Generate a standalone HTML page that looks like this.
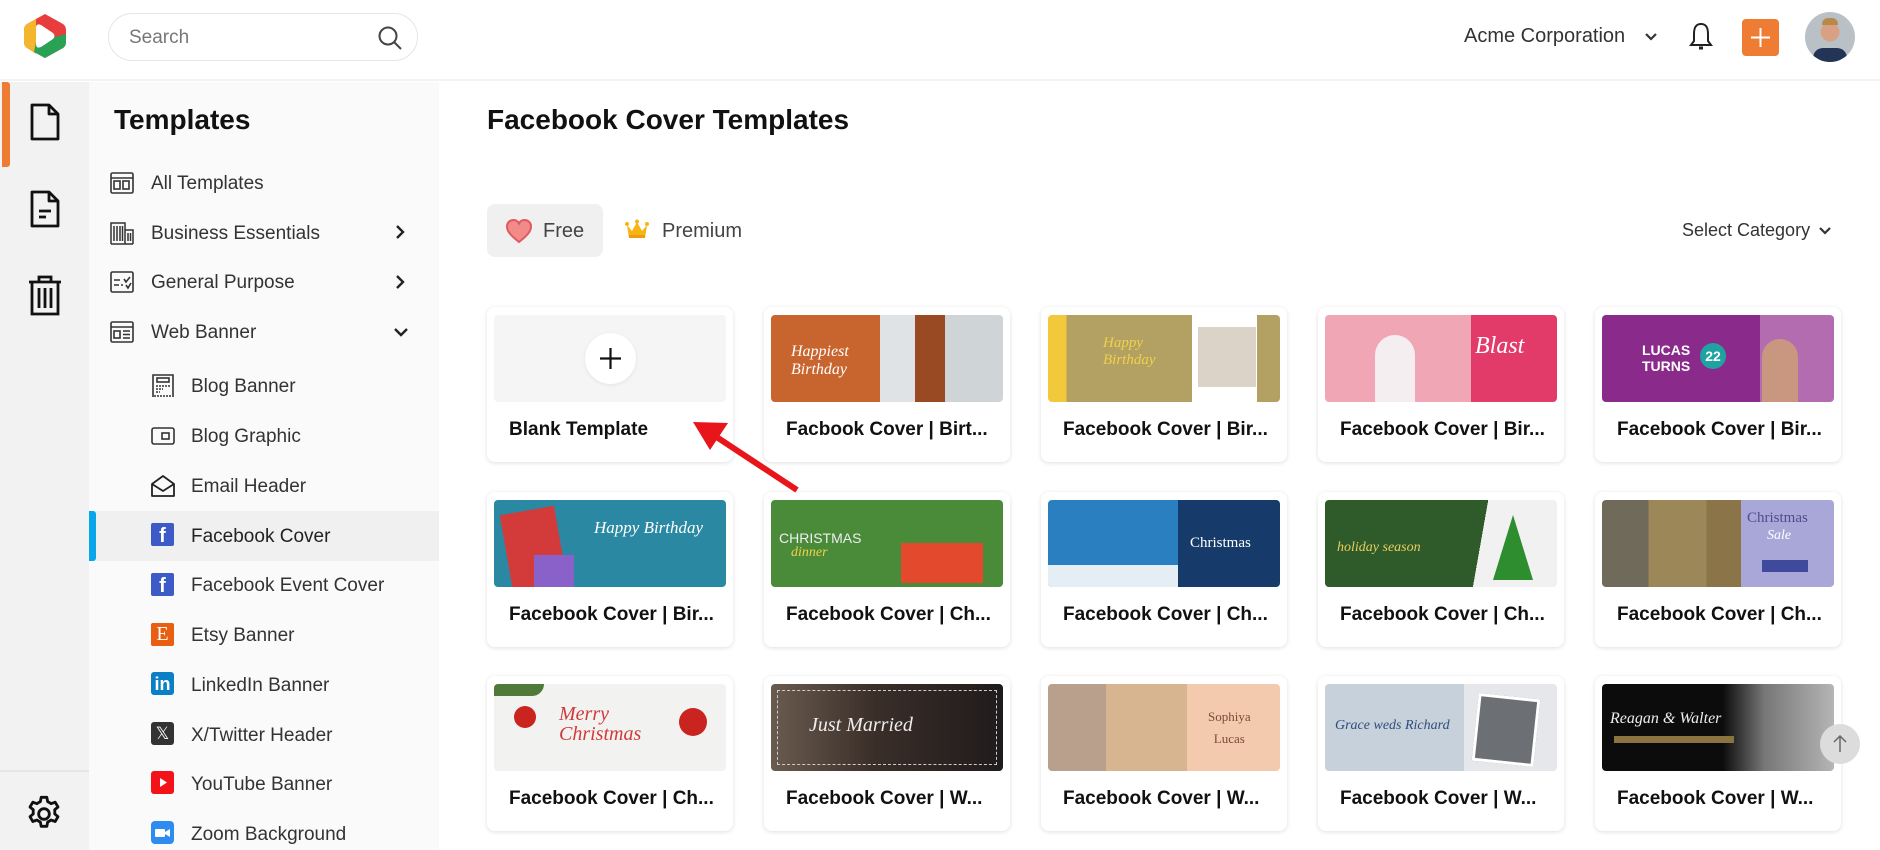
<!DOCTYPE html>
<html><head><meta charset="utf-8"><style>
*{box-sizing:border-box;margin:0;padding:0}
body{width:1880px;height:850px;overflow:hidden;background:#fff;font-family:"Liberation Sans",sans-serif;color:#333;position:relative}
.abs{position:absolute}
.hdr{left:0;top:0;width:1880px;height:81px;border-bottom:2px solid #f3f3f3;background:#fff}
.search{left:108px;top:13px;width:310px;height:48px;border:1px solid #e6e6e6;border-radius:24px}
.search span{position:absolute;left:20px;top:13px;font-size:19px;color:#777}
.rail{left:0;top:82px;width:89px;height:768px;background:#f2f2f2}
.side{left:89px;top:82px;width:350px;height:768px;background:#fafafa}
.mi{position:absolute;font-size:19px;color:#333;line-height:24px}
.ic{position:absolute;width:24px;height:24px}
.card{position:absolute;width:246px;height:155px;background:#fff;border-radius:8px;box-shadow:0 1px 5px rgba(0,0,0,.13)}
.card .im{position:absolute;left:7px;top:8px;width:232px;height:87px;border-radius:4px;overflow:hidden}
.card .t{position:absolute;left:22px;top:112px;font-size:19px;font-weight:bold;color:#111;white-space:nowrap}
.im i{position:absolute;font-style:italic;font-family:"Liberation Serif",serif}
</style></head><body>
<div class="abs hdr"></div>
<svg class="abs" style="left:22px;top:12px" width="46" height="48" viewBox="0 0 46 48">
<path d="M23 2 L41 12 Q44 14 44 18 L44 30 Q44 34 41 36 L23 46 Q23 46 23 46 L5 36 Q2 34 2 30 L2 18 Q2 14 5 12 Z" fill="#e93c3c"/>
<path d="M2 18 Q2 14 5 12 L14 7 L14 42 L5 36 Q2 34 2 30 Z" fill="#f3b62c"/>
<path d="M14 30 L44 22 L44 30 Q44 34 41 36 L23 46 L12 40 Z" fill="#2aa255"/>
<path d="M14 16 Q14 11 19 13 L31 21 Q34 24 31 27 L19 35 Q14 37 14 32 Z" fill="#fff"/>
</svg>
<div class="abs search"><span>Search</span>
<svg class="abs" style="left:268px;top:11px" width="26" height="26" viewBox="0 0 26 26" fill="none" stroke="#444" stroke-width="2"><circle cx="11" cy="11" r="8.5"/><path d="M17.5 17.5 L24 24"/></svg></div>
<div class="abs" style="left:1464px;top:25px;font-size:20px;color:#333">Acme Corporation</div>
<svg class="abs" style="left:1644px;top:32px" width="14" height="10" viewBox="0 0 14 10" fill="none" stroke="#333" stroke-width="2.2"><path d="M2 2 L7 7 L12 2"/></svg>
<svg class="abs" style="left:1689px;top:21px" width="24" height="30" viewBox="0 0 24 30" fill="none" stroke="#222" stroke-width="2"><path d="M12 3 C6 3 5 8 5 13 L5 20 L2 24 L22 24 L19 20 L19 13 C19 8 18 3 12 3 Z"/><path d="M10 27 L14 27" stroke-width="3"/></svg>
<div class="abs" style="left:1742px;top:19px;width:37px;height:37px;background:#ef7c33;border-radius:4px"></div>
<svg class="abs" style="left:1749px;top:26px" width="23" height="23" viewBox="0 0 23 23" stroke="#fff" stroke-width="2"><path d="M11.5 2 V21 M2 11.5 H21"/></svg>
<div class="abs" style="left:1805px;top:12px;width:50px;height:50px;border-radius:50%;background:radial-gradient(circle at 50% 40%,#d9a184 0 9px,#b9c1c6 10px);overflow:hidden"><div style="position:absolute;left:8px;top:36px;width:34px;height:20px;background:#233456;border-radius:10px 10px 0 0"></div><div style="position:absolute;left:17px;top:6px;width:16px;height:7px;background:#b88a4a;border-radius:6px 6px 0 0"></div></div>

<div class="abs rail"></div>
<div class="abs" style="left:2px;top:82px;width:8px;height:85px;background:#ef7c33;border-radius:0 3px 3px 0"></div>
<svg class="abs" style="left:29px;top:102px" width="32" height="40" viewBox="0 0 32 40" fill="none" stroke="#111" stroke-width="2.8" stroke-linejoin="round"><path d="M3 3 H20 L29 12 V37 H3 Z M20 3 V12 H29"/></svg>
<svg class="abs" style="left:29px;top:189px" width="32" height="40" viewBox="0 0 32 40" fill="none" stroke="#111" stroke-width="2.8" stroke-linejoin="round"><path d="M3 3 H20 L29 12 V37 H3 Z M20 3 V12 H29 M10 22 H22 M10 28 H17"/></svg>
<svg class="abs" style="left:27px;top:275px" width="36" height="42" viewBox="0 0 36 42" fill="none" stroke="#111" stroke-width="2.8"><path d="M2 7 H34 M12 7 V2 H24 V7 M5 7 V39 H31 V7 M12 13 V33 M18 13 V33 M24 13 V33"/></svg>
<div class="abs" style="left:0;top:770px;width:89px;height:2px;background:#e6e6e6"></div>
<svg class="abs" style="left:24px;top:794px" width="40" height="40" viewBox="0 0 24 24" fill="none" stroke="#111" stroke-width="1.7" stroke-linejoin="round"><circle cx="12" cy="12" r="3.2"/><path d="M10.3 2 h3.4 l.5 2.6 a7.5 7.5 0 0 1 2 1.2 l2.5-.9 1.7 2.9-2 1.7 a7.5 7.5 0 0 1 0 2.4 l2 1.7-1.7 2.9-2.5-.9 a7.5 7.5 0 0 1-2 1.2 l-.5 2.6 h-3.4 l-.5-2.6 a7.5 7.5 0 0 1-2-1.2 l-2.5.9-1.7-2.9 2-1.7 a7.5 7.5 0 0 1 0-2.4 l-2-1.7 1.7-2.9 2.5.9 a7.5 7.5 0 0 1 2-1.2 Z"/></svg>

<div class="abs side"></div>
<div class="abs" style="left:114px;top:104px;font-size:28px;font-weight:bold;color:#111">Templates</div>
<svg class="ic" style="left:110px;top:171px" viewBox="0 0 24 24" fill="none" stroke="#333" stroke-width="1.6"><rect x="1" y="2" width="22" height="20" rx="1.5"/><path d="M1 7 H23"/><rect x="4" y="10" width="6" height="8"/><rect x="13" y="10" width="6" height="8"/></svg>
<div class="mi" style="left:151px;top:172px">All Templates</div>
<svg class="ic" style="left:110px;top:221px" viewBox="0 0 24 24" fill="none" stroke="#333" stroke-width="1.5"><path d="M1 23 V2 H15 V23 M15 9 H23 V23 M1 23 H23 M4 5 V20 M7 5 V20 M10 5 V20 M12.5 5 V20 M18 12 V20 M20.5 12 V20"/></svg>
<div class="mi" style="left:151px;top:222px">Business Essentials</div>
<svg class="ic" style="left:110px;top:270px" viewBox="0 0 24 24" fill="none" stroke="#333" stroke-width="1.6"><rect x="1" y="2" width="22" height="20" rx="1.5"/><path d="M4 10 H10 M4 15 H9 M11 15 H13 M14 9 L16 12 L20 7 M16 15 L18 18 L21 13"/></svg>
<div class="mi" style="left:151px;top:271px">General Purpose</div>
<svg class="ic" style="left:110px;top:320px" viewBox="0 0 24 24" fill="none" stroke="#333" stroke-width="1.6"><rect x="1" y="2" width="22" height="20" rx="1.5"/><path d="M1 7 H23"/><rect x="4" y="11" width="6" height="7"/><path d="M13 11 H20 M13 14.5 H20 M13 18 H20"/></svg>
<div class="mi" style="left:151px;top:321px">Web Banner</div>
<svg class="abs" style="left:395px;top:224px" width="10" height="16" viewBox="0 0 10 16" fill="none" stroke="#222" stroke-width="2.4"><path d="M2 2 L8 8 L2 14"/></svg>
<svg class="abs" style="left:395px;top:274px" width="10" height="16" viewBox="0 0 10 16" fill="none" stroke="#222" stroke-width="2.4"><path d="M2 2 L8 8 L2 14"/></svg>
<svg class="abs" style="left:393px;top:327px" width="16" height="10" viewBox="0 0 16 10" fill="none" stroke="#222" stroke-width="2.4"><path d="M2 2 L8 8 L14 2"/></svg>
<svg class="ic" style="left:151px;top:374px" viewBox="0 0 24 24" fill="none" stroke="#333" stroke-width="1.6"><path d="M2 23 V1 H22 V23"/><rect x="6" y="4" width="12" height="4"/><path d="M5 12 H19 M5 15 H12 M5 18 H9 M3 22 H21" stroke-dasharray="2 1"/></svg>
<div class="mi" style="left:191px;top:375px">Blog Banner</div>
<svg class="ic" style="left:151px;top:424px" viewBox="0 0 24 24" fill="none" stroke="#333" stroke-width="1.6"><rect x="1" y="4" width="22" height="16" rx="2"/><rect x="11" y="9" width="7" height="6"/></svg>
<div class="mi" style="left:191px;top:425px">Blog Graphic</div>
<svg class="ic" style="left:151px;top:474px" viewBox="0 0 24 24" fill="none" stroke="#222" stroke-width="1.8" stroke-linejoin="round"><path d="M1 10 L12 2 L23 10 V22 H1 Z M1 10 L12 17 L23 10"/></svg>
<div class="mi" style="left:191px;top:475px">Email Header</div>
<div class="abs" style="left:89px;top:511px;width:350px;height:50px;background:#f0f0f0"></div>
<div class="abs" style="left:89px;top:511px;width:7px;height:50px;background:#0aa6ec;border-radius:0 3px 3px 0"></div>
<div class="abs" style="left:151px;top:523px;width:23px;height:23px;background:#3d5bc6;border-radius:2px;color:#fff;font-weight:bold;font-size:20px;text-align:center;line-height:27px">f</div>
<div class="mi" style="left:191px;top:525px;color:#222">Facebook Cover</div>
<div class="abs" style="left:151px;top:573px;width:23px;height:23px;background:#3d5bc6;border-radius:2px;color:#fff;font-weight:bold;font-size:20px;text-align:center;line-height:27px">f</div>
<div class="mi" style="left:191px;top:574px">Facebook Event Cover</div>
<div class="abs" style="left:151px;top:623px;width:23px;height:23px;background:#e95f12;border-radius:2px;color:#fff;font-family:'Liberation Serif',serif;font-size:20px;text-align:center;line-height:23px">E</div>
<div class="mi" style="left:191px;top:624px">Etsy Banner</div>
<div class="abs" style="left:151px;top:672px;width:23px;height:23px;background:#0a7fc6;border-radius:3px;color:#fff;font-weight:bold;font-size:18px;text-align:center;line-height:24px">in</div>
<div class="mi" style="left:191px;top:674px">LinkedIn Banner</div>
<div class="abs" style="left:151px;top:722px;width:23px;height:23px;background:#333;border-radius:3px;color:#fff;font-size:17px;text-align:center;line-height:23px">𝕏</div>
<div class="mi" style="left:191px;top:724px">X/Twitter Header</div>
<div class="abs" style="left:151px;top:771px;width:23px;height:23px;background:#f31218;border-radius:3px"></div>
<svg class="abs" style="left:151px;top:771px" width="23" height="23"><path d="M9 7 L16 11.5 L9 16 Z" fill="#fff"/></svg>
<div class="mi" style="left:191px;top:773px">YouTube Banner</div>
<div class="abs" style="left:151px;top:821px;width:23px;height:23px;background:#2e8cf0;border-radius:4px"></div>
<svg class="abs" style="left:151px;top:821px" width="23" height="23"><rect x="4" y="8" width="10" height="8" rx="1" fill="#fff"/><path d="M14 11 L19 8 V16 L14 13Z" fill="#fff"/></svg>
<div class="mi" style="left:191px;top:823px">Zoom Background</div>

<div class="abs" style="left:487px;top:104px;font-size:28px;font-weight:bold;color:#111">Facebook Cover Templates</div>
<div class="abs" style="left:487px;top:204px;width:116px;height:53px;background:#f0f0f0;border-radius:8px"></div>
<svg class="abs" style="left:505px;top:218px" width="28" height="26" viewBox="0 0 28 26"><path d="M14 24 C5 17 2 13 2 8.5 C2 4.5 5 2 8.5 2 C11 2 13 3.5 14 5.5 C15 3.5 17 2 19.5 2 C23 2 26 4.5 26 8.5 C26 13 23 17 14 24Z" fill="#f28a8a" stroke="#e0595f" stroke-width="2"/></svg>
<div class="abs" style="left:543px;top:220px;font-size:20px;color:#444">Free</div>
<svg class="abs" style="left:624px;top:219px" width="26" height="22" viewBox="0 0 26 22"><path d="M3 6 L8 12 L13 3 L18 12 L23 6 L21 19 H5 Z" fill="#f7b514"/><path d="M5 16 H21 V19 H5Z" fill="#f19a0c"/><circle cx="3" cy="5" r="2" fill="#f7b514"/><circle cx="13" cy="2.5" r="2" fill="#f7b514"/><circle cx="23" cy="5" r="2" fill="#f7b514"/></svg>
<div class="abs" style="left:662px;top:220px;font-size:20px;color:#444">Premium</div>
<div class="abs" style="left:1682px;top:220px;font-size:18px;color:#333">Select Category</div>
<svg class="abs" style="left:1818px;top:226px" width="14" height="10" viewBox="0 0 14 10" fill="none" stroke="#333" stroke-width="2.2"><path d="M2 2 L7 7 L12 2"/></svg>

<div class="card" style="left:487px;top:307px"><div class="im" style="background:#f5f5f5"><div style="position:absolute;left:91px;top:18px;width:51px;height:51px;border-radius:50%;background:#fff;box-shadow:0 1px 4px rgba(0,0,0,.08)"></div><svg style="position:absolute;left:104px;top:31px" width="25" height="25" stroke="#111" stroke-width="2.2"><path d="M12.5 2 V23 M2 12.5 H23"/></svg></div><div class="t">Blank Template</div></div>
<div class="card" style="left:764px;top:307px"><div class="im" style="background:linear-gradient(90deg,#c8652f 0 47%,#dfe3e6 47% 62%,#9a4a22 62% 75%,#cfd4d7 75%)"><i style="left:20px;top:28px;color:#fff;font-size:16px">Happiest<br>Birthday</i></div><div class="t">Facbook Cover | Birt...</div></div>
<div class="card" style="left:1041px;top:307px"><div class="im" style="background:linear-gradient(90deg,#f2c93a 0 8%,#b3a063 8% 62%,#fff 62% 90%,#b3a063 90%)"><div style="position:absolute;left:150px;top:12px;width:58px;height:60px;background:#dbd2c8"></div><i style="left:55px;top:20px;color:#f0d14a;font-size:15px">Happy<br>Birthday</i></div><div class="t">Facebook Cover | Bir...</div></div>
<div class="card" style="left:1318px;top:307px"><div class="im" style="background:linear-gradient(90deg,#f1a6b5 0 63%,#e23b69 63%)"><div style="position:absolute;left:50px;top:20px;width:40px;height:67px;background:#f4eef0;border-radius:20px 20px 0 0"></div><i style="left:150px;top:18px;color:#fff;font-size:24px">Blast</i></div><div class="t">Facebook Cover | Bir...</div></div>
<div class="card" style="left:1595px;top:307px"><div class="im" style="background:linear-gradient(90deg,#8a2a8a 0 68%,#b36cb0 68%)"><div style="position:absolute;left:40px;top:27px;color:#fff;font-weight:bold;font-size:14px;line-height:16px">LUCAS<br>TURNS</div><div style="position:absolute;left:98px;top:28px;width:26px;height:26px;border-radius:50%;background:#1fa2a0;color:#fff;font-weight:bold;font-size:14px;text-align:center;line-height:26px">22</div><div style="position:absolute;left:160px;top:24px;width:36px;height:63px;background:#c9977f;border-radius:18px 18px 0 0"></div></div><div class="t">Facebook Cover | Bir...</div></div>
<div class="card" style="left:487px;top:492px"><div class="im" style="background:#2b88a2"><div style="position:absolute;left:12px;top:10px;width:55px;height:77px;background:#d33b3b;transform:rotate(-10deg)"></div><div style="position:absolute;left:40px;top:55px;width:40px;height:32px;background:#8a61c9"></div><i style="left:100px;top:18px;color:#fff;font-size:17px">Happy Birthday</i></div><div class="t">Facebook Cover | Bir...</div></div>
<div class="card" style="left:764px;top:492px"><div class="im" style="background:#4a8b3a"><div style="position:absolute;left:130px;top:43px;width:82px;height:40px;background:#e3492c"></div><div style="position:absolute;left:8px;top:30px;color:#eee;font-size:14px">CHRISTMAS</div><i style="left:20px;top:45px;color:#f1d04b;font-size:14px">dinner</i></div><div class="t">Facebook Cover | Ch...</div></div>
<div class="card" style="left:1041px;top:492px"><div class="im" style="background:linear-gradient(90deg,#2a7fc0 0 56%,#163a6a 56%)"><div style="position:absolute;left:0;top:65px;width:130px;height:22px;background:#e6eef5"></div><div style="position:absolute;left:142px;top:35px;color:#fff;font-size:15px;font-family:'Liberation Serif',serif">Christmas</div></div><div class="t">Facebook Cover | Ch...</div></div>
<div class="card" style="left:1318px;top:492px"><div class="im" style="background:linear-gradient(100deg,#2f5a29 0 66%,#f1f1f1 66%)"><i style="left:12px;top:40px;color:#e8cf61;font-size:14px">holiday season</i><div style="position:absolute;left:168px;top:15px;width:0;height:0;border-left:20px solid transparent;border-right:20px solid transparent;border-bottom:65px solid #2d8d2f"></div></div><div class="t">Facebook Cover | Ch...</div></div>
<div class="card" style="left:1595px;top:492px"><div class="im" style="background:linear-gradient(90deg,#6f6a5a 0 20%,#9c8758 20% 45%,#8b7448 45% 60%,#a9a6d8 60%)"><div style="position:absolute;left:145px;top:10px;color:#4c4f8c;font-size:15px;font-family:'Liberation Serif',serif">Christmas</div><i style="left:165px;top:28px;color:#fff;font-size:14px">Sale</i><div style="position:absolute;left:160px;top:60px;width:46px;height:12px;background:#3f4a9c"></div></div><div class="t">Facebook Cover | Ch...</div></div>
<div class="card" style="left:487px;top:676px"><div class="im" style="background:#f2f2f0"><div style="position:absolute;left:20px;top:22px;width:22px;height:22px;border-radius:50%;background:#c9241f"></div><div style="position:absolute;left:185px;top:24px;width:28px;height:28px;border-radius:50%;background:#c9241f"></div><div style="position:absolute;left:0;top:0;width:50px;height:12px;background:#4f7a3a;border-radius:0 0 20px 0"></div><i style="left:65px;top:20px;color:#d13a3a;font-size:20px;line-height:20px">Merry<br>Christmas</i></div><div class="t">Facebook Cover | Ch...</div></div>
<div class="card" style="left:764px;top:676px"><div class="im" style="background:linear-gradient(90deg,#6a5b4f,#3a2e28 45%,#1f1b1c)"><div style="position:absolute;left:6px;top:6px;right:6px;bottom:6px;border:1px dashed #ccc"></div><i style="left:38px;top:30px;color:#eee;font-size:20px">Just Married</i></div><div class="t">Facebook Cover | W...</div></div>
<div class="card" style="left:1041px;top:676px"><div class="im" style="background:linear-gradient(90deg,#b9a08c 0 25%,#d7b590 25% 60%,#f3caae 60%)"><div style="position:absolute;left:160px;top:22px;color:#7a4a3a;font-size:13px;font-family:'Liberation Serif',serif;line-height:22px;text-align:center">Sophiya<br>Lucas</div></div><div class="t">Facebook Cover | W...</div></div>
<div class="card" style="left:1318px;top:676px"><div class="im" style="background:linear-gradient(90deg,#c7d1dc 0 60%,#e5e7ea 60%)"><i style="left:10px;top:34px;color:#2f4c7c;font-size:14px">Grace weds Richard</i><div style="position:absolute;left:150px;top:12px;width:62px;height:68px;background:#6c6f74;transform:rotate(6deg);border:3px solid #fff"></div></div><div class="t">Facebook Cover | W...</div></div>
<div class="card" style="left:1595px;top:676px"><div class="im" style="background:linear-gradient(90deg,#0c0c0c 0 52%,#777 70%,#b5b5b5)"><i style="left:8px;top:26px;color:#eee;font-size:16px">Reagan &amp; Walter</i><div style="position:absolute;left:12px;top:52px;width:120px;height:7px;background:#8a7440"></div></div><div class="t">Facebook Cover | W...</div></div>

<svg class="abs" style="left:680px;top:410px" width="130" height="90" viewBox="0 0 130 90"><path d="M117 80 L32 24" stroke="#e8161b" stroke-width="6"/><path d="M13 12 L48 13 L30 40 Z" fill="#e8161b"/></svg>
<div class="abs" style="left:1820px;top:724px;width:40px;height:40px;border-radius:50%;background:#dcdcdc"></div>
<svg class="abs" style="left:1830px;top:734px" width="20" height="20" fill="none" stroke="#666" stroke-width="1.5"><path d="M10 2 V18 M4 8 L10 2 L16 8"/></svg>
</body></html>
